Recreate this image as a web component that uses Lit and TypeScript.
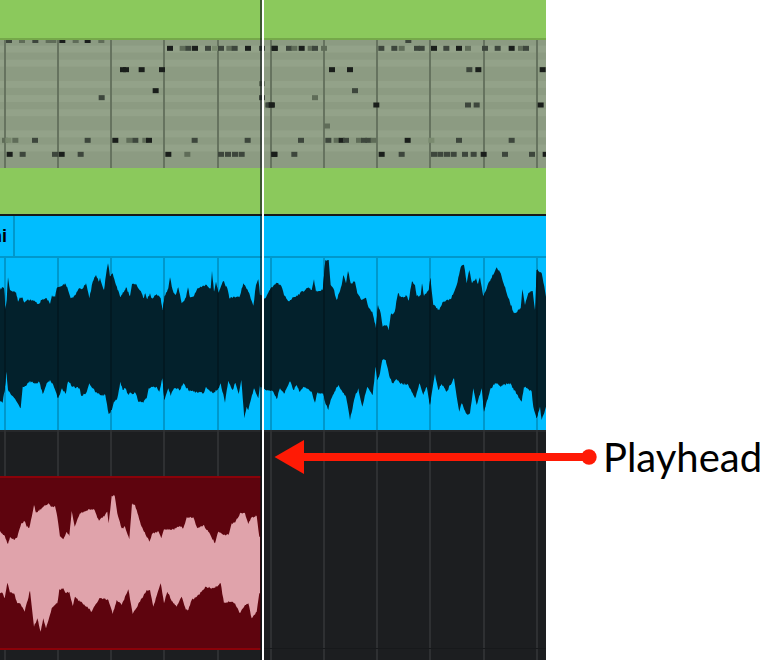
import { LitElement, html, css, svg } from "lit";
import { customElement } from "lit/decorators.js";

type P = number[];
const GRID = [5, 58, 111, 164, 218, 271, 324, 377, 430, 484, 537];

// Envelope points are traced at 3x scale; [x, y, x, y, ...]
const cyanTopA: P = [0,240,6,232,12,235,16,300,20,270,24,202,30,240,48,247,54,275,60,262,66,262,72,276,84,268,100,272,116,282,125,270,140,265,150,282,156,256,165,262,170,235,185,228,195,220,202,232,212,265,225,256,237,235,245,238,258,220,268,265,278,215,288,195,296,215,300,203,312,240,318,195,324,160,330,200,338,190,348,225,362,262,378,232,390,258,396,222,410,225,425,250,430,265,436,250,442,268,450,250,456,265,470,252,482,265,488,300,494,258,505,235,510,202,518,240,526,255,535,232,545,280,558,262,564,232,570,262,580,260,590,240,600,232,620,225,632,235,636,183,642,245,648,215,656,250,670,213,682,235,688,265,700,260,718,262,730,220,745,245,760,287,768,225,775,208,780,256];
const cyanBotA: P = [0,575,8,578,14,540,19,485,24,540,40,560,50,575,62,595,68,530,75,528,90,512,100,520,118,516,128,552,140,520,150,510,160,525,174,565,186,535,197,552,204,515,218,530,238,535,244,558,258,550,268,520,285,545,300,555,316,555,326,612,335,600,342,575,352,565,361,515,368,540,376,535,384,552,406,548,415,575,430,578,440,565,446,535,456,530,470,530,478,545,487,505,493,570,505,535,512,558,522,535,540,540,550,520,565,540,580,545,612,548,618,530,640,550,655,535,662,520,675,578,685,512,698,540,706,518,716,552,724,510,733,625,740,590,745,600,756,555,762,535,775,565,780,525];
const cyanTopB: P = [0,255,16,265,30,240,50,218,64,228,72,255,86,274,100,262,120,250,145,232,155,240,162,208,168,245,188,240,196,150,206,150,212,225,220,235,230,270,245,225,250,195,258,220,264,183,272,220,285,215,292,250,304,270,318,263,325,290,337,305,348,355,354,285,362,310,368,350,380,345,386,360,392,315,404,305,414,250,424,262,440,258,446,272,456,214,465,225,470,258,482,255,486,220,492,258,506,240,511,203,520,285,538,300,550,275,572,268,590,225,602,172,612,165,620,220,628,180,636,220,648,205,654,222,660,202,670,260,685,220,710,172,722,190,740,250,762,310,782,295,787,238,795,285,805,250,818,243,825,300,830,180,845,190,858,260];
const cyanBotB: P = [0,530,16,540,40,545,50,568,60,535,74,550,90,514,100,540,110,525,118,545,130,530,155,545,165,578,172,548,190,550,196,580,205,600,212,570,235,525,258,560,270,630,285,560,295,535,307,590,322,530,338,555,347,470,352,510,360,490,367,450,377,450,383,475,390,505,398,520,410,508,420,520,445,525,465,565,478,520,490,555,500,530,510,585,525,492,535,540,545,522,560,545,582,505,590,560,598,605,605,580,620,612,630,610,640,535,650,585,665,535,672,605,690,540,705,520,720,528,750,520,785,575,792,530,815,545,820,590,830,625,840,590,845,630,858,590];
const redTop: P = [0,303,12,315,24,342,30,322,42,330,52,322,64,280,74,274,80,290,88,293,102,225,108,248,125,235,145,220,155,230,165,228,172,260,180,320,190,328,200,305,208,318,215,243,224,290,240,250,270,238,282,238,297,272,315,255,322,245,326,280,335,197,344,197,352,250,365,295,375,290,388,328,396,220,405,225,425,290,448,335,458,310,476,305,484,325,492,298,520,298,540,288,550,295,560,262,580,262,592,295,610,285,625,305,645,340,655,305,670,315,685,315,695,280,705,278,720,250,735,250,745,282,755,262,770,258,778,320,780,320];
const redBot: P = [0,488,8,490,14,505,22,458,30,488,42,490,52,520,60,520,74,545,90,482,102,590,112,565,122,605,130,565,138,595,155,535,172,520,178,478,190,475,198,490,208,485,218,528,225,500,240,515,260,530,275,545,298,505,325,510,338,552,350,510,365,525,385,478,398,552,420,515,440,480,450,480,460,530,482,460,492,520,502,485,520,520,530,530,545,500,558,540,565,540,575,510,590,500,618,470,640,475,662,460,672,520,690,515,705,520,720,550,735,525,745,520,755,565,770,545,778,490,780,490];

// Small deterministic noise so the envelopes have the fine grain of real audio.
let seed = 7;
function rnd(): number {
  seed = (seed * 16807) % 2147483647;
  return seed / 2147483647;
}

// Resample a traced envelope to roughly one point per pixel, with grain, in real px.
function resample(e: P, xOff: number, yOff: number, grain: number): string[] {
  const out: string[] = [];
  for (let i = 0; i < e.length - 2; i += 2) {
    const x0 = e[i] / 3, y0 = e[i + 1] / 3, x1 = e[i + 2] / 3, y1 = e[i + 3] / 3;
    const n = Math.max(1, Math.round((x1 - x0) / 0.8));
    for (let k = 0; k < n; k++) {
      const t = k / n;
      const j = k === 0 ? 0 : (rnd() - 0.5) * grain;
      out.push(`${(x0 + (x1 - x0) * t + xOff).toFixed(1)},${(y0 + (y1 - y0) * t + j + yOff).toFixed(1)}`);
    }
  }
  out.push(`${(e[e.length - 2] / 3 + xOff).toFixed(1)},${(e[e.length - 1] / 3 + yOff).toFixed(1)}`);
  return out;
}

function outline(top: P, bot: P, xOff: number, yOff: number, grain: number): string {
  return [...resample(top, xOff, yOff, grain), ...resample(bot, xOff, yOff, grain).reverse()].join(" ");
}

const WAVE_A = outline(cyanTopA, cyanBotA, 0, -48, 2.2);
const WAVE_B = outline(cyanTopB, cyanBotB, 260, -48, 2.2);
const WAVE_R = outline(redTop, redBot, 0, 0, 1.8);

// Notes: [y-centre (3x), [[x-centre (3x), shade], ...]]; shade 3 dark, 2 mid, 1 light, 0 faint
type Row = [number, [number, number][]];
const notesA: Row[] = [
  [124, [[27,2],[66,1],[106,2],[146,1],[160,1],[187,3],[227,1],[263,3],[304,1]]],
  [145, [[510,3],[548,1],[565,2],[585,3],[624,2],[645,0],[663,2],[688,1],[704,2],[744,3],[786,2],[824,3]]],
  [209, [[369,3],[378,3],[425,3],[486,3]]],
  [251, [[786,1]]],
  [272, [[467,3]]],
  [293, [[305,2],[786,2]]],
  [315, [[808,2],[815,3]]],
  [421, [[15,1],[25,0],[46,1],[105,2],[263,2],[346,3],[388,1],[406,2],[436,1],[447,3],[584,2],[743,2]]],
  [463, [[29,3],[68,2],[165,2],[185,3],[242,2],[505,3],[562,1],[663,2],[684,2],[705,2],[725,2],[823,3]]],
];
const notesB: Row[] = [
  [124, [[445,2]]],
  [145, [[44,3],[87,2],[103,1],[125,3],[152,1],[165,2],[192,1],[364,2],[403,2],[425,1],[471,2],[485,2],[522,3],[559,2],[597,3],[624,1],[675,2],[713,2],[755,3],[783,1],[798,2]]],
  [209, [[216,3],[270,3],[628,2],[655,3],[848,3]]],
  [272, [[285,2]]],
  [293, [[165,1]]],
  [315, [[25,2],[35,3],[349,3],[624,2],[650,2],[842,3]]],
  [378, [[201,1]]],
  [421, [[123,2],[205,2],[230,1],[245,3],[258,2],[297,1],[312,2],[325,2],[341,1],[443,3],[514,0],[597,2],[755,2]]],
  [463, [[43,3],[103,2],[365,3],[425,2],[522,2],[541,2],[561,2],[581,2],[615,2],[641,2],[671,3],[735,2],[816,2],[857,3]]],
];
const SHADE = ["#7a8a6f", "#5f6c58", "#3d463c", "#1a1e1b"];
const ROWS = [0, 1, 0, 1, 0, 0, 1, 0, 1, 0, 1, 0, 0, 1, 0, 1, 0, 0];

function noteRects(rows: Row[], xOff: number) {
  return rows.flatMap(([y, ns]) =>
    ns.map(([x, s]) => svg`<rect x=${x / 3 + xOff - 3} y=${Math.max(y / 3 - 2.5, 40) - 40} width="6" height=${y === 124 ? 3 : 5} fill=${SHADE[s]}></rect>`)
  );
}

@customElement("app-root")
export class AppRoot extends LitElement {
  static styles = css`
    :host { display: block; width: 770px; height: 660px; background: #fff; overflow: hidden; }
    .page { position: relative; display: flex; align-items: flex-start; height: 660px; }
    .timeline { width: 546px; height: 660px; display: flex; flex-direction: column; flex: none; }
    .green { height: 38px; background: #8bc95c; flex: none; }
    .green.lower { height: 46px; }
    .rule { height: 2px; background: #75a84a; flex: none; }
    .notes { height: 128px; flex: none; display: block; }
    .soft { filter: blur(0.45px); }
    .sep { height: 2px; background: #16191b; flex: none; }
    .header { height: 40px; flex: none; background: #00bdff; border-bottom: 2px solid #0098cc; display: flex; align-items: center; }
    .name { width: 15px; box-sizing: border-box; height: 100%; border-right: 2px solid #0098cc; display: flex; align-items: center; justify-content: flex-end; overflow: hidden; padding-right: 6px; font: 700 18px "Liberation Sans", sans-serif; color: #000; flex: none; white-space: nowrap; }
    .wave { height: 172px; flex: none; display: block; }
    .dark { height: 230px; flex: none; display: block; }
    .playhead { position: absolute; left: 260px; top: 0; width: 2px; height: 660px; background: rgba(10, 16, 18, 0.6); border-right: 2px solid #fff; }
    .arrow { position: absolute; left: 270px; top: 437px; }
    .label { position: absolute; left: 603px; top: 432px; font: 400 40px/50px Lato, sans-serif; color: #000; white-space: nowrap; }
  `;

  render() {
    return html`
      <div class="page">
        <div class="timeline">
          <div class="green"></div>
          <div class="rule"></div>
          <svg class="notes" width="546" height="128" viewBox="0 0 546 128">
            <rect width="546" height="128" fill="#8c9b82"></rect>
            <g class="soft">
              ${ROWS.map((r, i) => r ? svg`<rect x="-2" y=${7.07 * i - 1.5} width="550" height="7" fill="#93a289"></rect>` : svg``)}
              ${GRID.map((x) => svg`<rect x=${x - 1} y="-2" width="2" height="132" fill="#66735f"></rect>`)}
              ${noteRects(notesA, 0)}
              ${noteRects(notesB, 260)}
            </g>
          </svg>
          <div class="green lower"></div>
          <div class="sep"></div>
          <div class="header"><div class="name">ni</div></div>
          <svg class="wave" width="546" height="172" viewBox="0 0 546 172">
            <defs>
              <clipPath id="waveClip">
                <polygon points=${WAVE_A}></polygon>
                <polygon points=${WAVE_B}></polygon>
              </clipPath>
            </defs>
            <rect width="546" height="172" fill="#00bdff"></rect>
            ${GRID.map((x) => svg`<rect x=${x - 1} y="0" width="2" height="172" fill="#0098cc"></rect>`)}
            <polygon fill="#03212c" points=${WAVE_A}></polygon>
            <polygon fill="#03212c" points=${WAVE_B}></polygon>
            <g clip-path="url(#waveClip)">
              ${GRID.map((x) => svg`<rect x=${x - 1} y="0" width="2" height="172" fill="#021922"></rect>`)}
            </g>
          </svg>
          <svg class="dark" width="546" height="230" viewBox="0 0 546 230">
            <rect width="546" height="230" fill="#1c1e20"></rect>
            <rect width="546" height="2" fill="#26282a"></rect>
            ${GRID.map((x) => svg`<rect x=${x - 1} y="0" width="2" height="230" fill="#2e3032"></rect>`)}
            <rect y="218" width="546" height="1" fill="#17191b"></rect>
            <rect x="0" y="46" width="261" height="174" fill="#5e040e"></rect>
            <rect x="0" y="46" width="261" height="2" fill="#8a0209"></rect>
            <rect x="0" y="218" width="261" height="2" fill="#8a0209"></rect>
            <polygon fill="#e0a3ab" points=${WAVE_R}></polygon>
          </svg>
        </div>
        <div class="playhead"></div>
        <svg class="arrow" width="330" height="40" viewBox="0 0 330 40">
          <rect x="30" y="16" width="290" height="8" fill="#ff1a05"></rect>
          <polygon points="4.5,20 34,3 34,37" fill="#ff1a05"></polygon>
          <circle cx="319" cy="20" r="7.7" fill="#ff1a05"></circle>
        </svg>
        <div class="label">Playhead</div>
      </div>
    `;
  }
}
